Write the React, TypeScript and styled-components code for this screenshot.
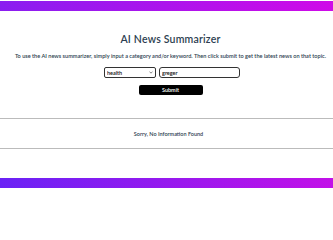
import React, { useState } from 'react';
import styled, { createGlobalStyle } from 'styled-components';

const GlobalStyle = createGlobalStyle`
  html, body {
    margin: 0;
    padding: 0;
    background: #ffffff;
  }
  body {
    font-family: 'Lato', 'Open Sans', sans-serif;
    color: #2c3e50;
  }
`;

const Page = styled.div`
  display: flex;
  flex-direction: column;
  padding-top: 1px;
`;

const GradientBar = styled.div<{ $from: string; $to: string }>`
  height: 10px;
  background: linear-gradient(90deg, ${(p) => p.$from}, ${(p) => p.$to});
`;

const Main = styled.main`
  display: flex;
  flex-direction: column;
  align-items: center;
  padding: 22px 0 0 8px;
`;

const Title = styled.h1`
  margin: 0;
  font-size: 10.5px;
  line-height: 13px;
  font-weight: 600;
  letter-spacing: 0.2px;
  color: #2c3e50;
`;

const Intro = styled.p`
  margin: 6px 0 0;
  font-size: 5.6px;
  line-height: 7px;
  font-weight: 600;
  color: #2c3e50;
  text-align: center;
  white-space: nowrap;
`;

const Form = styled.form`
  display: flex;
  flex-direction: column;
  align-items: center;
  margin-top: 8px;
  gap: 7px;
`;

const FieldRow = styled.div`
  display: flex;
  align-items: flex-start;
  gap: 3px;
  margin-left: 3px;
`;

const SelectWrap = styled.div`
  position: relative;
  width: 52px;
  height: 11px;
`;

const Select = styled.select`
  display: block;
  appearance: none;
  width: 100%;
  height: 100%;
  box-sizing: border-box;
  margin: 0;
  border: 1px solid #333;
  border-radius: 2px;
  padding: 0 2px;
  font-family: inherit;
  font-size: 5.5px;
  font-weight: 600;
  color: #111;
  background: #fff;
  outline: none;
`;

const Chevron = styled.svg`
  position: absolute;
  right: 3px;
  top: 4px;
  width: 4px;
  height: 3px;
  pointer-events: none;
`;

const TextInput = styled.input`
  display: block;
  width: 81px;
  height: 11px;
  box-sizing: border-box;
  margin: 0;
  border: 1px solid #333;
  border-radius: 3px;
  padding: 0 2px;
  font-family: inherit;
  font-size: 5.5px;
  font-weight: 600;
  color: #111;
  outline: none;
`;

const SubmitButton = styled.button`
  width: 64px;
  height: 10px;
  border: none;
  border-radius: 2px;
  background: #000;
  color: #fff;
  font-family: inherit;
  font-size: 5.5px;
  font-weight: 600;
  padding: 0;
  cursor: pointer;
`;

const Results = styled.section`
  margin-top: 23px;
  border-top: 1px solid #bbb;
  border-bottom: 1px solid #bbb;
  height: 29px;
  display: flex;
  align-items: center;
  justify-content: center;
`;

const Empty = styled.p`
  margin: 0 0 0 4px;
  font-size: 5.5px;
  font-weight: 600;
  color: #2c3e50;
`;

const Footer = styled.div`
  margin-top: 29px;
`;

export default function App() {
  const [category, setCategory] = useState('health');
  const [keyword, setKeyword] = useState('greger');

  return (
    <Page>
      <GlobalStyle />
      <GradientBar $from="#8a1ef0" $to="#cf0ae8" />
      <Main>
        <Title>AI News Summarizer</Title>
        <Intro>
          To use the AI news summarizer, simply input a category and/or keyword. Then click submit
          to get the latest news on that topic.
        </Intro>
        <Form onSubmit={(e) => e.preventDefault()}>
          <FieldRow>
            <SelectWrap>
              <Select value={category} onChange={(e) => setCategory(e.target.value)}>
                <option value="business">business</option>
                <option value="entertainment">entertainment</option>
                <option value="general">general</option>
                <option value="health">health</option>
                <option value="science">science</option>
                <option value="sports">sports</option>
                <option value="technology">technology</option>
              </Select>
              <Chevron viewBox="0 0 4 3">
                <path d="M0.5 0.6 L2 2.2 L3.5 0.6" fill="none" stroke="#555" strokeWidth="0.7" />
              </Chevron>
            </SelectWrap>
            <TextInput value={keyword} onChange={(e) => setKeyword(e.target.value)} />
          </FieldRow>
          <SubmitButton type="submit">Submit</SubmitButton>
        </Form>
      </Main>
      <Results>
        <Empty>Sorry, No Information Found</Empty>
      </Results>
      <Footer>
        <GradientBar $from="#6a22f5" $to="#c210e8" />
      </Footer>
    </Page>
  );
}
